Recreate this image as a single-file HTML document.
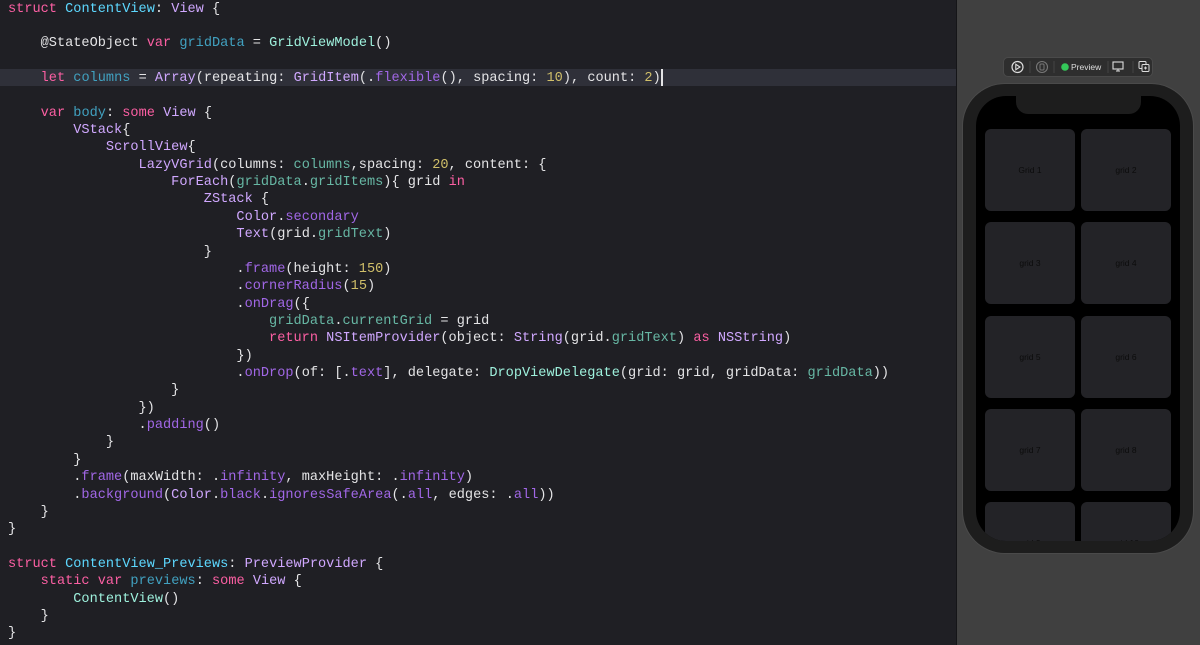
<!DOCTYPE html>
<html><head><meta charset="utf-8"><style>
body{margin:0;width:1200px;height:645px;overflow:hidden;background:#1f1f24;position:relative;font-family:"Liberation Sans",sans-serif}
pre{margin:0;position:absolute;left:8px;top:0.5px;font-family:"Liberation Mono",monospace;font-size:13.6px;line-height:17.36px;color:#e4e4e6;white-space:pre}
.hl{position:absolute;left:0;top:69px;width:956px;height:17px;background:#2f3039}
.cur{position:absolute;left:661px;top:69px;width:1.5px;height:17px;background:#e4e4e6}
.k{color:#fc5fa3}.t{color:#d0a8ff}.d{color:#5dd8ff}.v{color:#41a1c0}.p{color:#9ef1dd}.f{color:#67b7a4}.m{color:#a167e6}.n{color:#d0bf69}
.panel{position:absolute;left:956px;top:0;width:244px;height:645px;background:#404040;border-left:1px solid #151518}
.tb{position:absolute;left:1003px;top:57px;width:150px;height:20px;background:#2e2e2e;border:1px solid #4a4a4a;border-radius:5px;box-sizing:border-box}
.phone{position:absolute;left:963px;top:84px;width:230px;height:469px;background:#1d1d1d;border-radius:42px;box-shadow:0 0 0 1px #4a4a4a}
.screen{position:absolute;left:976px;top:96px;width:204px;height:445px;background:#000;border-radius:30px;overflow:hidden}
.notch{position:absolute;left:40px;top:0;width:125px;height:18px;background:#1d1d1d;border-radius:0 0 12px 12px}
.c{position:absolute;width:90px;height:82px;background:#232327;border-radius:6px;font-size:8.5px;color:#0c0c0c;display:flex;align-items:center;justify-content:center}
</style></head><body>
<div class="hl"></div><div class="cur"></div>
<pre><span class="k">struct</span> <span class="d">ContentView</span>: <span class="t">View</span> {

    @StateObject <span class="k">var</span> <span class="v">gridData</span> = <span class="p">GridViewModel</span>()

    <span class="k">let</span> <span class="v">columns</span> = <span class="t">Array</span>(repeating: <span class="t">GridItem</span>(.<span class="m">flexible</span>(), spacing: <span class="n">10</span>), count: <span class="n">2</span>)

    <span class="k">var</span> <span class="v">body</span>: <span class="k">some</span> <span class="t">View</span> {
        <span class="t">VStack</span>{
            <span class="t">ScrollView</span>{
                <span class="t">LazyVGrid</span>(columns: <span class="f">columns</span>,spacing: <span class="n">20</span>, content: {
                    <span class="t">ForEach</span>(<span class="f">gridData</span>.<span class="f">gridItems</span>){ grid <span class="k">in</span>
                        <span class="t">ZStack</span> {
                            <span class="t">Color</span>.<span class="m">secondary</span>
                            <span class="t">Text</span>(grid.<span class="f">gridText</span>)
                        }
                            .<span class="m">frame</span>(height: <span class="n">150</span>)
                            .<span class="m">cornerRadius</span>(<span class="n">15</span>)
                            .<span class="m">onDrag</span>({
                                <span class="f">gridData</span>.<span class="f">currentGrid</span> = grid
                                <span class="k">return</span> <span class="t">NSItemProvider</span>(object: <span class="t">String</span>(grid.<span class="f">gridText</span>) <span class="k">as</span> <span class="t">NSString</span>)
                            })
                            .<span class="m">onDrop</span>(of: [.<span class="m">text</span>], delegate: <span class="p">DropViewDelegate</span>(grid: grid, gridData: <span class="f">gridData</span>))
                    }
                })
                .<span class="m">padding</span>()
            }
        }
        .<span class="m">frame</span>(maxWidth: .<span class="m">infinity</span>, maxHeight: .<span class="m">infinity</span>)
        .<span class="m">background</span>(<span class="t">Color</span>.<span class="m">black</span>.<span class="m">ignoresSafeArea</span>(.<span class="m">all</span>, edges: .<span class="m">all</span>))
    }
}

<span class="k">struct</span> <span class="d">ContentView_Previews</span>: <span class="t">PreviewProvider</span> {
    <span class="k">static</span> <span class="k">var</span> <span class="v">previews</span>: <span class="k">some</span> <span class="t">View</span> {
        <span class="p">ContentView</span>()
    }
}</pre>
<div class="panel"></div>
<div class="tb">
<svg width="150" height="20" style="position:absolute;left:-1px;top:-1px">
<circle cx="14.5" cy="10" r="5.5" fill="none" stroke="#ddd" stroke-width="1.2"/><path d="M12.8 7.3v5.4l4.2-2.7z" fill="none" stroke="#ddd" stroke-width="1.1"/>
<line x1="27" y1="4" x2="27" y2="16" stroke="#444"/>
<circle cx="39" cy="10" r="5.5" fill="none" stroke="#777" stroke-width="1.1"/><rect x="37" y="7" width="4" height="6" rx="1" fill="none" stroke="#777"/>
<line x1="51" y1="4" x2="51" y2="16" stroke="#444"/>
<circle cx="62" cy="10" r="3.8" fill="#34c759"/>
<text x="68" y="13.2" font-family="Liberation Sans" font-size="8.5" fill="#ddd">Preview</text>
<line x1="105" y1="4" x2="105" y2="16" stroke="#444"/>
<rect x="110" y="5" width="10" height="7" fill="none" stroke="#ddd" stroke-width="1.1"/><path d="M113 14h4M115 12v2" stroke="#ddd"/>
<line x1="130" y1="4" x2="130" y2="16" stroke="#444"/>
<rect x="136" y="4.5" width="7" height="7" rx="1" fill="none" stroke="#ddd"/><rect x="139" y="7.5" width="7" height="7" rx="1" fill="#2e2e2e" stroke="#ddd"/><path d="M142.5 9.5v3M141 11h3" stroke="#ddd" stroke-width=".9"/>
</svg></div>
<div class="phone"></div>
<div class="screen"><div class="notch"></div>
<div class="c" style="left:9px;top:33px">Grid 1</div><div class="c" style="left:105px;top:33px">grid 2</div>
<div class="c" style="left:9px;top:126px">grid 3</div><div class="c" style="left:105px;top:126px">grid 4</div>
<div class="c" style="left:9px;top:220px">grid 5</div><div class="c" style="left:105px;top:220px">grid 6</div>
<div class="c" style="left:9px;top:313px">grid 7</div><div class="c" style="left:105px;top:313px">grid 8</div>
<div class="c" style="left:9px;top:406px">grid 9</div><div class="c" style="left:105px;top:406px">grid 10</div>
</div>
</body></html>
